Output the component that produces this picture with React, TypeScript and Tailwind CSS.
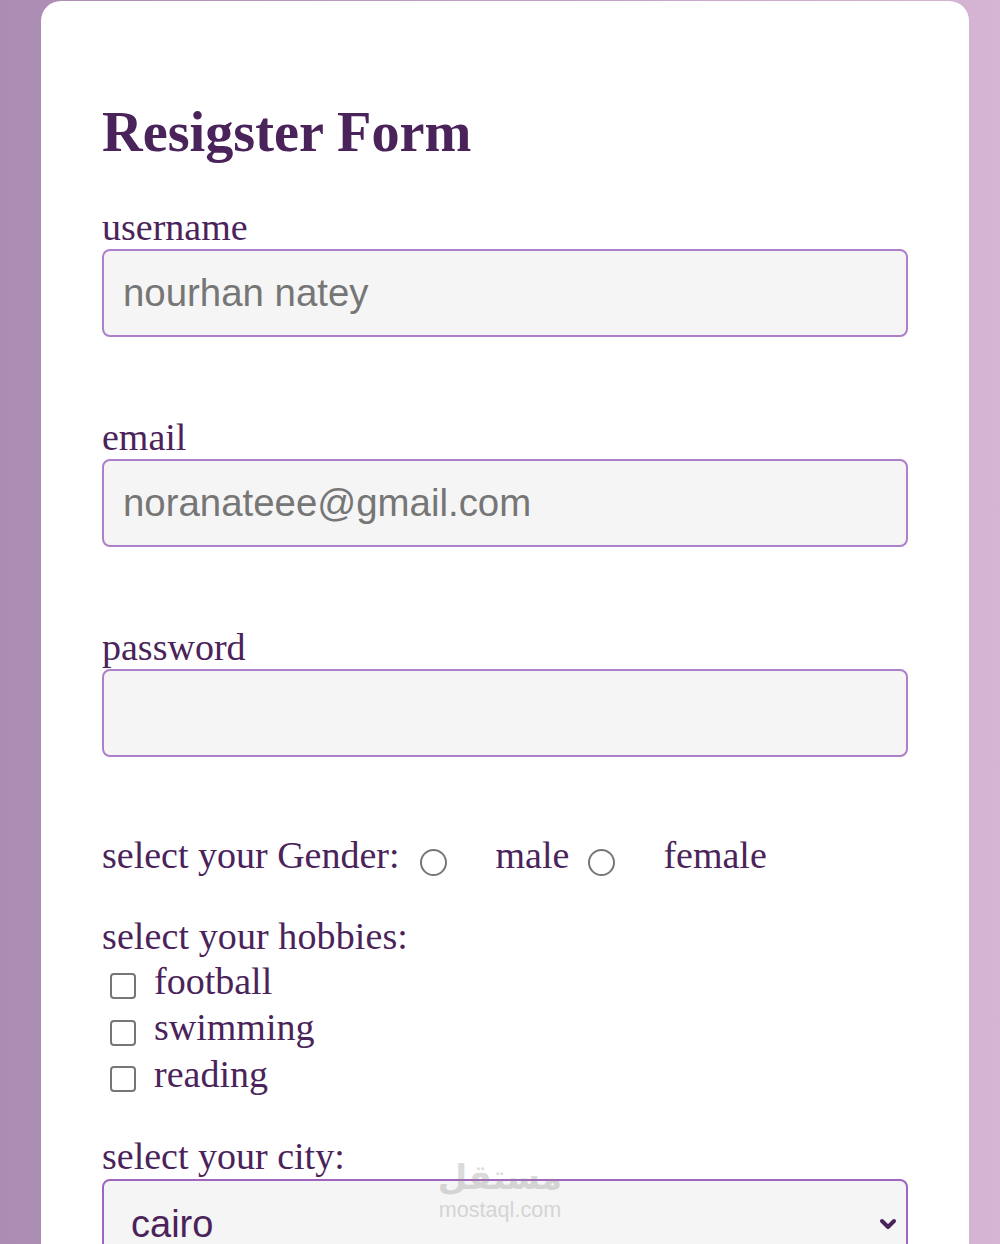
import React from 'react';
import { ChevronDown } from 'lucide-react';

const inputClass =
  'block w-full h-[88px] rounded-lg border-2 border-[#ae7fcb] bg-[#f5f5f5] px-[19px] text-[38.4px] text-[#4a235a] placeholder:text-[#767676] outline-none';
const sansFont = { fontFamily: '"Liberation Sans", Arial, sans-serif' };

const hobbies = ['football', 'swimming', 'reading'];

export default function App() {
  return (
    <div className="h-[1244px] overflow-hidden bg-gradient-to-r from-[#ab8cb3] to-[#d6b5d4] pt-px font-['Liberation_Serif',serif] text-[#4a235a]">
      <div className="relative mr-[31px] ml-[41px] rounded-t-[20px] bg-white px-[61px] pt-[99px] pb-20">
        <h1 className="mb-[42px] text-[56.3px] font-bold leading-[64px]">Resigster Form</h1>

        {/* Champs texte */}
        <div className="w-[806px]">
          <label className="block h-[43px] text-[38px] leading-[43px]">username</label>
          <input className={inputClass} style={sansFont} placeholder="nourhan natey" />

          <label className="mt-[79px] block h-[43px] text-[38px] leading-[43px]">email</label>
          <input className={inputClass} style={sansFont} placeholder="noranateee@gmail.com" />

          <label className="mt-[79px] block h-[43px] text-[38px] leading-[43px]">password</label>
          <input type="password" className={inputClass} style={sansFont} />
        </div>

        {/* Genre */}
        <div className="mt-[77px] flex h-[43px] items-center text-[38px] leading-[43px]">
          <span>select your Gender:</span>
          <input type="radio" name="gender" className="mt-[14px] ml-[20px] h-[27px] w-[27px] appearance-none rounded-full border-2 border-[#767676] bg-white" />
          <span className="ml-[49px]">male</span>
          <input type="radio" name="gender" className="mt-[14px] ml-[19px] h-[27px] w-[27px] appearance-none rounded-full border-2 border-[#767676] bg-white" />
          <span className="ml-[48px]">female</span>
        </div>

        {/* Loisirs */}
        <div className="mt-[38px] h-[43px] text-[38px] leading-[43px] tracking-[0.1px]">select your hobbies:</div>
        <div className="flex flex-col">
          {hobbies.map((hobby) => (
            <label key={hobby} className="flex h-[46.5px] items-center text-[38px] leading-[43px]">
              <input type="checkbox" className="mt-[10px] ml-[8px] h-[26px] w-[26px] appearance-none rounded-[4px] border-2 border-[#767676] bg-white" />
              <span className="ml-[18px]">{hobby}</span>
            </label>
          ))}
        </div>

        {/* Ville */}
        <div className="mt-[37px] h-[44px] text-[38px] leading-[43px]">select your city:</div>
        <div className="relative w-[806px]">
          <select
            className="block h-[88px] w-full appearance-none rounded-lg border-2 border-[#a066bf] bg-[#f5f5f5] px-[27px] pt-[4px] text-[38px] text-[#4a235a] outline-none"
            style={sansFont}
          >
            <option>cairo</option>
            <option>alex</option>
          </select>
          <ChevronDown
            className="pointer-events-none absolute top-[33px] right-[8px] h-[24px] w-[24px] text-[#4a235a]"
            strokeWidth={4}
          />
        </div>

        {/* Filigrane */}
        <div className="pointer-events-none absolute top-[1158px] left-[397px] flex w-[124px] flex-col items-center text-[#8a8a8a] opacity-30">
          <span dir="rtl" className="h-[37px] font-['DejaVu_Sans',sans-serif] text-[34px] font-bold leading-[37px]">
            مستقل
          </span>
          <span className="mt-[4px] whitespace-nowrap text-[21.6px] leading-[20px]" style={sansFont}>mostaql.com</span>
        </div>
      </div>
    </div>
  );
}
